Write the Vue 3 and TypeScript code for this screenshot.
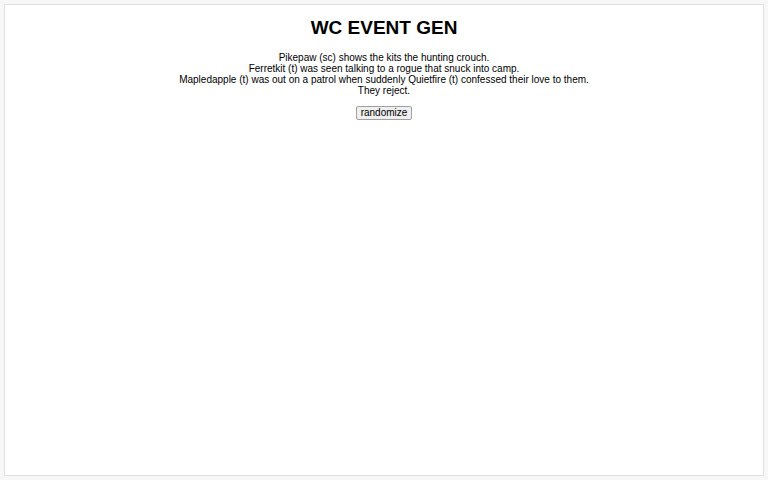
<script setup lang="ts">
import { ref } from 'vue'

const initial: string[] = [
  'Pikepaw (sc) shows the kits the hunting crouch.',
  'Ferretkit (t) was seen talking to a rogue that snuck into camp.',
  'Mapledapple (t) was out on a patrol when suddenly Quietfire (t) confessed their love to them.',
  'They reject.',
]

const events = ref<string[]>(initial)

function randomize(): void {
  events.value = [...events.value].sort(() => Math.random() - 0.5)
}
</script>

<template>
  <main class="page">
    <section class="panel">
      <h1 class="title">WC EVENT GEN</h1>
      <div class="events">
        <div v-for="event in events" :key="event">{{ event }}</div>
      </div>
      <button type="button" class="randomize" @click="randomize">randomize</button>
    </section>
  </main>
</template>

<style>
body {
  background: #f7f7f7;
}
</style>

<style scoped>
.page {
  box-sizing: border-box;
  display: flex;
  min-height: 100vh;
  padding: 4px;
  font-family: "Liberation Sans", Arial, sans-serif;
  font-size: 10px;
  line-height: 11px;
  color: #000;
}

.panel {
  flex: 1;
  display: flex;
  flex-direction: column;
  align-items: center;
  padding: 12px;
  border: 1px solid #e0e0e0;
  background: #fff;
  text-align: center;
}

.title {
  margin: 0 0 13px;
  font-size: 19px;
  line-height: 22px;
}

.events {
  margin-bottom: 10px;
}

.randomize {
  padding: 0 4px;
  border: 1px solid #a0a0a0;
  border-radius: 2px;
  background: #efefef;
  color: #000;
  font: inherit;
  line-height: 12px;
}
</style>
